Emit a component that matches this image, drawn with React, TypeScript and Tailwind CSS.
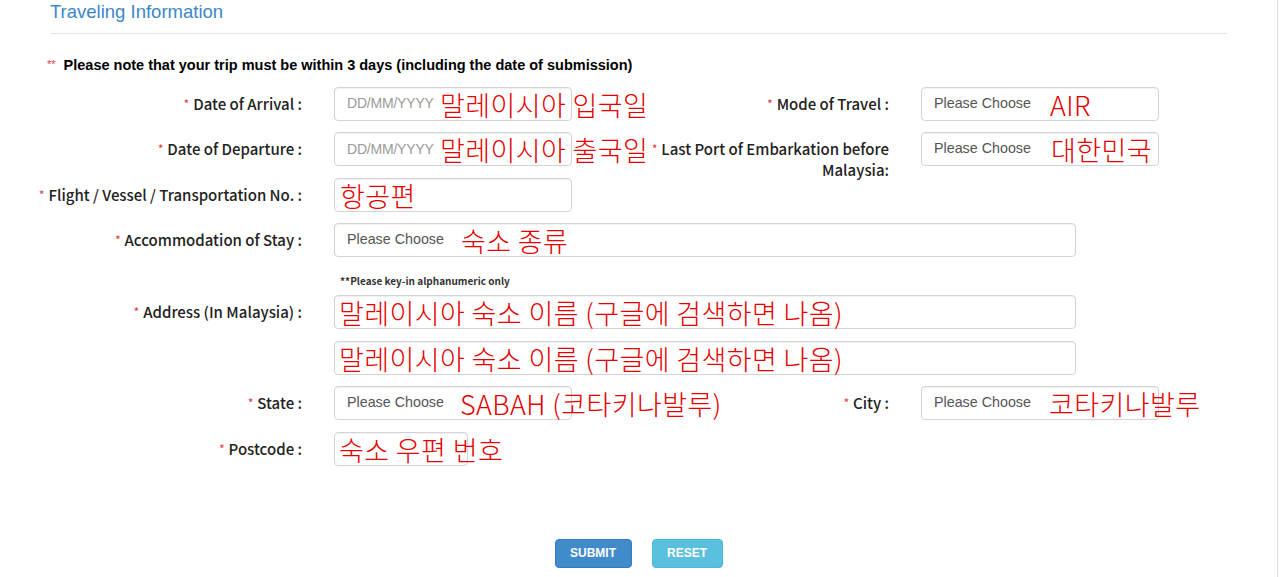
import React from 'react'

const labelFont = { fontFamily: '"Noto Sans CJK KR", "Noto Sans", sans-serif' }

const Star = () => <span className='text-[#e4393c] text-[11px] mr-[4px] relative -top-[2px]'>*</span>

const Red = ({ left, children }: { left: number; children: React.ReactNode }) => (
    <span
        className='absolute top-1/2 -translate-y-1/2 whitespace-nowrap text-[27px] tracking-[0.4px] leading-none font-light text-[#e60000] z-10 font-["Noto_Sans_CJK_KR",sans-serif]'
        style={{ left }}
    >
        {children}
    </span>
)

const Box = ({ width, text, dim, red, redLeft }: { width: string; text?: string; dim?: boolean; red?: string; redLeft?: number }) => (
    <div className={`relative h-[34px] shrink-0 rounded-[4px] border border-[#d4d4d4] bg-white shadow-[inset_0_1px_1px_rgba(0,0,0,0.06)] flex items-center pl-[12px] ${width}`}>
        {text && (
            <span className={dim ? 'text-[14px] text-[#9a9a9a] tracking-[-0.2px]' : 'text-[14.3px] text-[#555]'}>{text}</span>
        )}
        {red && <Red left={redLeft ?? 6}>{red}</Red>}
    </div>
)

const Label = ({ children, className = '' }: { children: React.ReactNode; className?: string }) => (
    <div style={labelFont} className={`shrink-0 text-right pt-[7px] text-[15px] leading-[20px] font-medium text-[#222] ${className}`}>
        {children}
    </div>
)

const App = () => {
    return (
        <main className='w-[1280px] h-[577px] bg-white overflow-hidden font-["Liberation_Sans",Arial,sans-serif]'>
            <div className='w-[1278px] h-full border-r border-[#dcdcdc] flex flex-col'>
                {/* Header */}
                <h2 className='pl-[50px] text-[18.5px] leading-[24px] text-[#3a87c9]'>Traveling Information</h2>
                <div className='ml-[50px] w-[1177px] mt-[9px] border-t border-[#e5e5e5]' />

                <p className='mt-[22px] pl-[47px] text-[14.5px] leading-[18px] font-bold text-black'>
                    <span className='text-[#e4393c] font-normal text-[11px] mr-[8px] relative -top-[2px]'>**</span>
                    Please note that your trip must be within 3 days (including the date of submission)
                </p>

                {/* Arrival / Mode */}
                <div className='flex mt-[11.5px]'>
                    <Label className='w-[302px]'><Star />Date of Arrival :</Label>
                    <div className='ml-[32px]'>
                        <Box width='w-[238px]' text='DD/MM/YYYY' dim red='말레이시아 입국일' redLeft={105} />
                    </div>
                    <Label className='w-[317px]'><Star />Mode of Travel :</Label>
                    <div className='ml-[32px]'>
                        <Box width='w-[238px]' text='Please Choose' red='AIR' redLeft={128} />
                    </div>
                </div>

                {/* Departure / Last port */}
                <div className='flex mt-[11.5px] h-[34px]'>
                    <Label className='w-[302px]'><Star />Date of Departure :</Label>
                    <div className='ml-[32px]'>
                        <Box width='w-[238px]' text='DD/MM/YYYY' dim red='말레이시아 출국일' redLeft={105} />
                    </div>
                    <Label className='w-[317px] pl-[64px]'><Star />Last Port of Embarkation before Malaysia:</Label>
                    <div className='ml-[32px]'>
                        <Box width='w-[238px]' text='Please Choose' red='대한민국' redLeft={129} />
                    </div>
                </div>

                {/* Flight */}
                <div className='flex mt-[11.5px]'>
                    <Label className='w-[302px]'><Star />Flight / Vessel / Transportation No. :</Label>
                    <div className='ml-[32px]'>
                        <Box width='w-[238px]' red='항공편' redLeft={5} />
                    </div>
                </div>

                {/* Accommodation */}
                <div className='flex mt-[11.5px]'>
                    <Label className='w-[302px]'><Star />Accommodation of Stay :</Label>
                    <div className='ml-[32px]'>
                        <Box width='w-[742px]' text='Please Choose' red='숙소 종류' redLeft={126} />
                    </div>
                </div>

                <div className='ml-[340px] h-[38px] pt-[18px] text-[10px] leading-[12px] font-bold text-[#333]' style={labelFont}>
                    **Please key-in alphanumeric only
                </div>

                {/* Address */}
                <div className='flex'>
                    <Label className='w-[302px]'><Star />Address (In Malaysia) :</Label>
                    <div className='ml-[32px]'>
                        <Box width='w-[742px]' red='말레이시아 숙소 이름 (구글에 검색하면 나옴)' redLeft={4} />
                    </div>
                </div>
                <div className='flex mt-[11.5px] pl-[334px]'>
                    <Box width='w-[742px]' red='말레이시아 숙소 이름 (구글에 검색하면 나옴)' redLeft={4} />
                </div>

                {/* State / City */}
                <div className='flex mt-[11.5px]'>
                    <Label className='w-[302px]'><Star />State :</Label>
                    <div className='ml-[32px]'>
                        <Box width='w-[238px]' text='Please Choose' red='SABAH (코타키나발루)' redLeft={125} />
                    </div>
                    <Label className='w-[317px]'><Star />City :</Label>
                    <div className='ml-[32px]'>
                        <Box width='w-[238px]' text='Please Choose' red='코타키나발루' redLeft={127} />
                    </div>
                </div>

                {/* Postcode */}
                <div className='flex mt-[11.5px]'>
                    <Label className='w-[302px]'><Star />Postcode :</Label>
                    <div className='ml-[32px]'>
                        <Box width='w-[134px]' red='숙소 우편 번호' redLeft={4} />
                    </div>
                </div>

                {/* Buttons */}
                <div className='flex justify-center gap-[20px] mt-[73px]'>
                    <button className='w-[77px] h-[29px] rounded-[4px] bg-[#428bca] border border-[#357ebd] text-white text-[12px] font-bold'>SUBMIT</button>
                    <button className='w-[71px] h-[29px] rounded-[4px] bg-[#5bc0de] border border-[#46b8da] text-white text-[12px] font-bold'>RESET</button>
                </div>
            </div>
        </main>
    )
}

export default App
